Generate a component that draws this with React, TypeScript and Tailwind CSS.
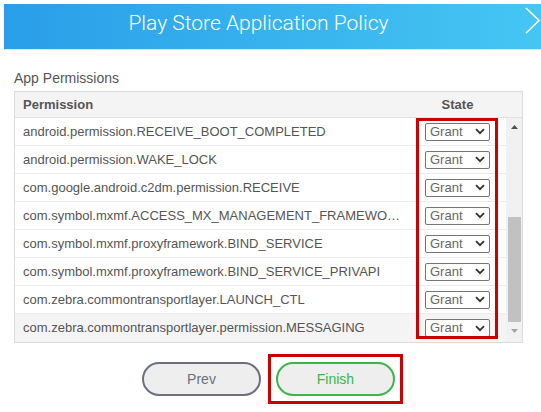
import React from "react";

const permissions = [
    "android.permission.RECEIVE_BOOT_COMPLETED",
    "android.permission.WAKE_LOCK",
    "com.google.android.c2dm.permission.RECEIVE",
    "com.symbol.mxmf.ACCESS_MX_MANAGEMENT_FRAMEWORK",
    "com.symbol.mxmf.proxyframework.BIND_SERVICE",
    "com.symbol.mxmf.proxyframework.BIND_SERVICE_PRIVAPI",
    "com.zebra.commontransportlayer.LAUNCH_CTL",
    "com.zebra.commontransportlayer.permission.MESSAGING",
];

function GrantSelect() {
    return (
        <div className="flex h-[18px] w-[65px] shrink-0 items-center justify-between rounded-[2px] border border-[#767676] bg-white pl-[4px] pr-[4px] text-[13px] text-[#666]">
            <span>Grant</span>
            <svg width="10" height="7" viewBox="0 0 10 7" fill="none">
                <path d="M1 1.2L5 5.2L9 1.2" stroke="#333" strokeWidth="1.8" />
            </svg>
        </div>
    );
}

export default function App() {
    return (
        <div className="relative h-[412px] w-[541px] overflow-hidden bg-white font-['Liberation_Sans',Arial,sans-serif]">
            <div className="ml-[4px] mt-[4px] flex h-[46px] items-center justify-center border-b border-[#e4e4e4] bg-gradient-to-r from-[#2a9ee9] to-[#45c6f2] pb-[5px] pr-[28px]">
                <h1 className="font-['Roboto',sans-serif] text-[21px] font-light text-white">Play Store Application Policy</h1>
                <svg className="absolute left-[525px] top-[7px]" width="20" height="28" viewBox="0 0 20 28" fill="none">
                    <path d="M1 1L14 13.5L1 26" stroke="white" strokeWidth="1.6" />
                </svg>
            </div>
            <div className="px-[14px] pt-[18px]">
                <div className="text-[14px] text-[#555]">App Permissions</div>
                <div className="mt-[2px] w-[509px] border border-[#dcdcdc]">
                    <div className="flex h-[26px] items-center border-b border-[#e2e2e2] bg-[#f4f4f4] text-[13px] font-bold text-[#555]">
                        <div className="flex-1 pl-[8px]">Permission</div>
                        <div className="mr-[32px] w-[65px] text-center">State</div>
                    </div>
                    <div className="flex">
                        <div className="relative min-w-0 flex-1">
                            {permissions.map((p, i) => (
                                <div
                                    key={p}
                                    className={`flex h-[28px] items-center ${i < permissions.length - 1 ? "border-b border-[#ececec]" : ""} ${i === permissions.length - 1 ? "bg-[#f4f4f4]" : ""}`}
                                >
                                    <div className="min-w-0 flex-1 truncate pl-[8px] pr-[22px] text-[13px] text-[#555]">{p}</div>
                                    <div className="flex w-[81px] shrink-0 items-center">
                                        <GrantSelect />
                                    </div>
                                </div>
                            ))}
                            <div className="pointer-events-none absolute left-[401px] top-0 h-[221px] w-[82px] border-[3px] border-[#cc0000]" />
                        </div>
                        <div className="flex w-[16px] flex-col items-center bg-[#f1f1f1]">
                            <div className="flex h-[17px] items-center justify-center">
                                <svg width="7" height="4" viewBox="0 0 7 4"><path d="M0 4L3.5 0L7 4Z" fill="#505050" /></svg>
                            </div>
                            <div className="h-[82px]" />
                            <div className="h-[105px] w-[13px] bg-[#c1c1c1]" />
                            <div className="flex h-[17px] items-center justify-center">
                                <svg width="7" height="4" viewBox="0 0 7 4"><path d="M0 0L7 0L3.5 4Z" fill="#a3a3a3" /></svg>
                            </div>
                        </div>
                    </div>
                </div>
                <div className="mt-[19px] flex justify-center gap-[15px] pr-[4px]">
                    <button className="h-[34px] w-[119px] rounded-full border-2 border-[#6b7080] bg-[#eeeeee] text-[14px] text-[#6b7080]">Prev</button>
                    <div className="-m-[8px] border-[3px] border-[#cc0000] p-[5px]">
                        <button className="block h-[34px] w-[119px] rounded-full border-2 border-[#3cb54a] bg-[#eeeeee] text-[14px] text-[#3cb54a]">Finish</button>
                    </div>
                </div>
            </div>
        </div>
    );
}
